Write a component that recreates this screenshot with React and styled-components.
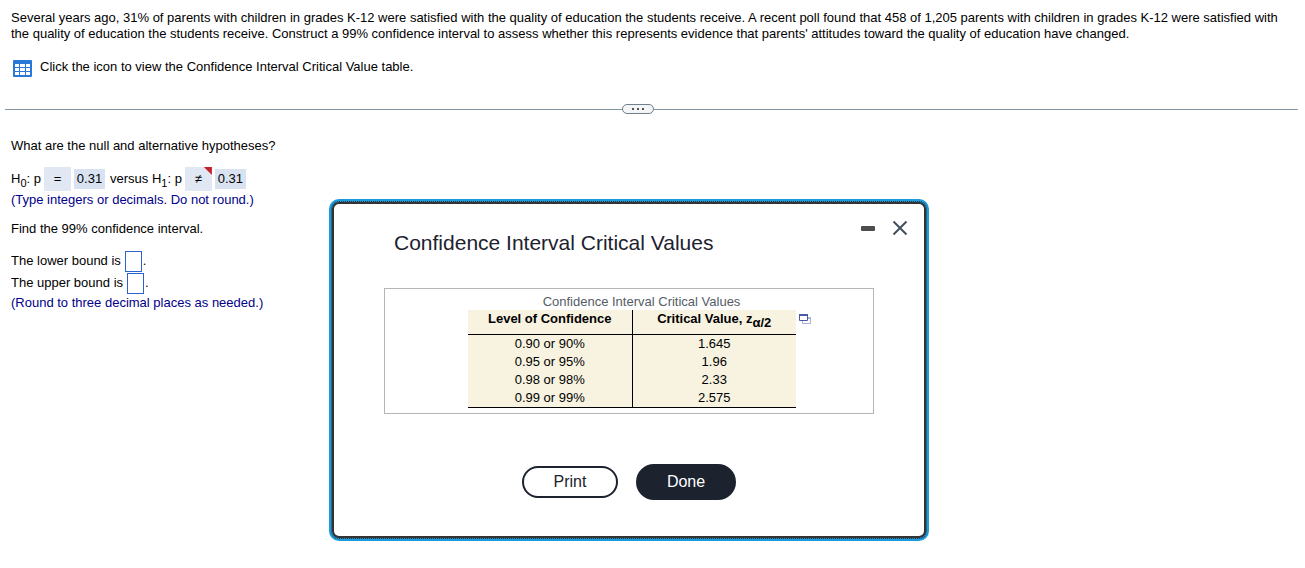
import React from 'react';
import styled, { createGlobalStyle } from 'styled-components';

const BASE_FONT_FAMILY = '"Liberation Sans", Arial, Helvetica, sans-serif';

const GlobalStyle = createGlobalStyle`
  body{
    margin:0;
    background:#fff;
    color:#000;
    font-family:${BASE_FONT_FAMILY};
    font-size:13px;
    line-height:16px;
  }
  *{
    box-sizing:border-box;
  }
`
const Page = styled.main`
  position:relative;
  min-height:568px;
  padding:10px 7px 0 5px;
`
const Question = styled.section`
  padding:0 6px;
`
const Text = styled.p`
  margin:0;
`
const TableLink = styled.button`
  display:flex;
  align-items:center;
  gap:8px;
  margin:15px 0 0;
  padding:0 2px;
  border:0;
  background:transparent;
  color:inherit;
  font:inherit;
  cursor:pointer;
  svg{
    margin-top:3px;
  }
`
const Splitter = styled.div`
  display:flex;
  align-items:center;
  margin:27px 0 24px;
`
const Line = styled.div`
  flex:${props => props.$grow};
  height:1px;
  background:#8395a0;
`
const Handle = styled.button`
  display:flex;
  align-items:center;
  justify-content:center;
  gap:3px;
  width:32px;
  height:10px;
  padding:0;
  border:1px solid #6f7f8c;
  border-radius:5px;
  background:#f3f5f7;
  cursor:pointer;
`
const Dot = styled.span`
  width:2px;
  height:2px;
  background:#555;
`
const Answers = styled.section`
  padding:0 6px;
`
const Row = styled.div`
  display:flex;
  align-items:center;
  height:${props => props.$height};
  margin-top:${props => props.$top || '0'};
`
const Symbol = styled.span`
  white-space:pre;
  sub{
    font-size:11px;
    line-height:1px;
    vertical-align:-4px;
  }
`
const Operator = styled.span`
  position:relative;
  width:27px;
  height:24px;
  margin:0 3px;
  background:#e2e8f3;
  line-height:24px;
  text-align:center;
`
const Flag = styled.span`
  position:absolute;
  top:0;
  right:0;
  width:8px;
  height:8px;
  background:#c4202b;
  clip-path:polygon(0 0, 100% 0, 100% 100%);
`
const Value = styled.span`
  width:31px;
  height:20px;
  margin-right:5px;
  background:#d9e2f1;
  line-height:20px;
  text-align:center;
`
const Hint = styled.p`
  margin:1px 0 0;
  color:#00008b;
`
const BoundInput = styled.input`
  width:17px;
  height:21px;
  margin:0 1px 0 4px;
  padding:0;
  border:1px solid #2b62cc;
  border-radius:0;
  background:#fff;
  font:inherit;
`
const Dialog = styled.div`
  position:absolute;
  top:202px;
  left:332px;
  width:594px;
  padding:14px 50px 36px;
  border:2px solid #333;
  border-radius:7px;
  outline:1px dotted #333;
  background:#fff;
  box-shadow:0 0 0 3px #1b9bdc;
`
const Controls = styled.div`
  display:flex;
  justify-content:flex-end;
  align-items:center;
  gap:16px;
  margin-right:-35px;
`
const IconButton = styled.button`
  display:flex;
  padding:0;
  border:0;
  background:transparent;
  cursor:pointer;
`
const Title = styled.h2`
  margin:-7px 0 33px 10px;
  color:#1c222e;
  font-size:21px;
  font-weight:400;
  line-height:24px;
`
const Panel = styled.div`
  display:flex;
  justify-content:center;
  padding:5px 0 5px 25px;
  border:1px solid #b5b5b5;
`
const Figure = styled.div`
  display:flex;
  flex-direction:column;
`
const FigureTitle = styled.div`
  color:#555c66;
  text-align:center;
`
const FigureRow = styled.div`
  display:flex;
  align-items:flex-start;
  gap:3px;
`
const PopOut = styled(IconButton)`
  width:16px;
  margin-top:4px;
`
const ValueTable = styled.table`
  width:328px;
  table-layout:fixed;
  border-collapse:collapse;
  border-bottom:1px solid #000;
  background:#f7f3e0;
  text-align:center;
  th{
    height:24px;
    padding:1px 0 0;
    border-bottom:1px solid #000;
    vertical-align:top;
  }
  td{
    height:18px;
    padding:0;
    line-height:18px;
  }
  th:first-child, td:first-child{
    border-right:1px solid #000;
  }
  sub{
    font-size:13px;
    line-height:1px;
    vertical-align:-4px;
  }
`
const Actions = styled.div`
  display:flex;
  justify-content:center;
  align-items:center;
  gap:18px;
  margin-top:50px;
`
const ActionButton = styled.button`
  width:${props => props.$primary ? '100px' : '96px'};
  height:${props => props.$primary ? '36px' : '32px'};
  padding:0;
  border:2px solid #1c222e;
  border-radius:18px;
  background:${props => props.$primary ? '#1c222e' : '#fff'};
  color:${props => props.$primary ? '#fff' : '#1c222e'};
  font-family:${BASE_FONT_FAMILY};
  font-size:16px;
  cursor:pointer;
`

const rows = [
  ['0.90 or 90%', '1.645'],
  ['0.95 or 95%', '1.96'],
  ['0.98 or 98%', '2.33'],
  ['0.99 or 99%', '2.575'],
];

function GridIcon(){
  return(
    <svg width="19" height="17" viewBox="0 0 19 17" aria-hidden="true">
      <rect width="19" height="17" rx="1" fill="#2878d8" />
      {[4, 8, 12].map(y => [2, 7, 13].map(x => (
        <rect key={`${x}-${y}`} x={x} y={y} width={x === 7 ? 5 : 4} height="3" fill="#fff" />
      )))}
    </svg>
  )
}

function PopOutIcon(){
  return(
    <svg width="12" height="10" viewBox="0 0 12 10" aria-hidden="true">
      <path d="M9 3.5h2.5v6h-8V7" fill="none" stroke="#aab0d8" />
      <path d="M9 3h3v2H9z" fill="#aab0d8" />
      <path d="M.5.5h8v6h-8z" fill="#fff" stroke="#4a5aa8" />
      <path d="M0 0h9v2H0z" fill="#4a5aa8" />
    </svg>
  )
}

function CriticalValues(){
  return(
    <Dialog role="dialog" aria-labelledby="dialog-title">
      <Controls>
        <IconButton aria-label="Minimize">
          <svg width="14" height="5"><rect width="14" height="5" rx="1" fill="#4d4d4d" /></svg>
        </IconButton>
        <IconButton aria-label="Close">
          <svg width="18" height="20" viewBox="0 0 18 20">
            <path d="M2.5 3.5l13 13M15.5 3.5l-13 13" stroke="#444f5c" strokeWidth="2" />
          </svg>
        </IconButton>
      </Controls>
      <Title id="dialog-title">Confidence Interval Critical Values</Title>
      <Panel>
        <Figure>
          <FigureTitle>Confidence Interval Critical Values</FigureTitle>
          <FigureRow>
            <ValueTable>
              <thead>
                <tr>
                  <th>Level of Confidence</th>
                  <th>Critical Value, z<sub>α/2</sub></th>
                </tr>
              </thead>
              <tbody>
                {rows.map(([level, value]) => (
                  <tr key={level}>
                    <td>{level}</td>
                    <td>{value}</td>
                  </tr>
                ))}
              </tbody>
            </ValueTable>
            <PopOut aria-label="Open table"><PopOutIcon /></PopOut>
          </FigureRow>
        </Figure>
      </Panel>
      <Actions>
        <ActionButton>Print</ActionButton>
        <ActionButton $primary>Done</ActionButton>
      </Actions>
    </Dialog>
  )
}

export default function App(){
  return(
    <Page>
      <GlobalStyle />
      <Question>
        <Text>
          Several years ago, 31% of parents with children in grades K-12 were satisfied with the quality of education the students receive. A recent poll found that 458 of 1,205 parents with children in grades K-12 were satisfied with the quality of education the students receive. Construct a 99% confidence interval to assess whether this represents evidence that parents' attitudes toward the quality of education have changed.
        </Text>
        <TableLink>
          <GridIcon />
          <span>Click the icon to view the Confidence Interval Critical Value table.</span>
        </TableLink>
      </Question>
      <Splitter>
        <Line $grow={23} />
        <Handle aria-label="Resize"><Dot /><Dot /><Dot /></Handle>
        <Line $grow={24} />
      </Splitter>
      <Answers>
        <Text>What are the null and alternative hypotheses?</Text>
        <Row $height="24px" $top="13px">
          <Symbol>H<sub>0</sub>: p</Symbol>
          <Operator>=</Operator>
          <Value>0.31</Value>
          <Symbol>versus H<sub>1</sub>: p</Symbol>
          <Operator>≠<Flag /></Operator>
          <Value>0.31</Value>
        </Row>
        <Hint>(Type integers or decimals. Do not round.)</Hint>
        <Row $height="16px" $top="13px">Find the 99% confidence interval.</Row>
        <Row $height="22px" $top="13px">
          <label htmlFor="lower">The lower bound is</label>
          <BoundInput id="lower" />.
        </Row>
        <Row $height="22px">
          <label htmlFor="upper">The upper bound is</label>
          <BoundInput id="upper" />.
        </Row>
        <Hint>(Round to three decimal places as needed.)</Hint>
      </Answers>
      <CriticalValues />
    </Page>
  )
}
